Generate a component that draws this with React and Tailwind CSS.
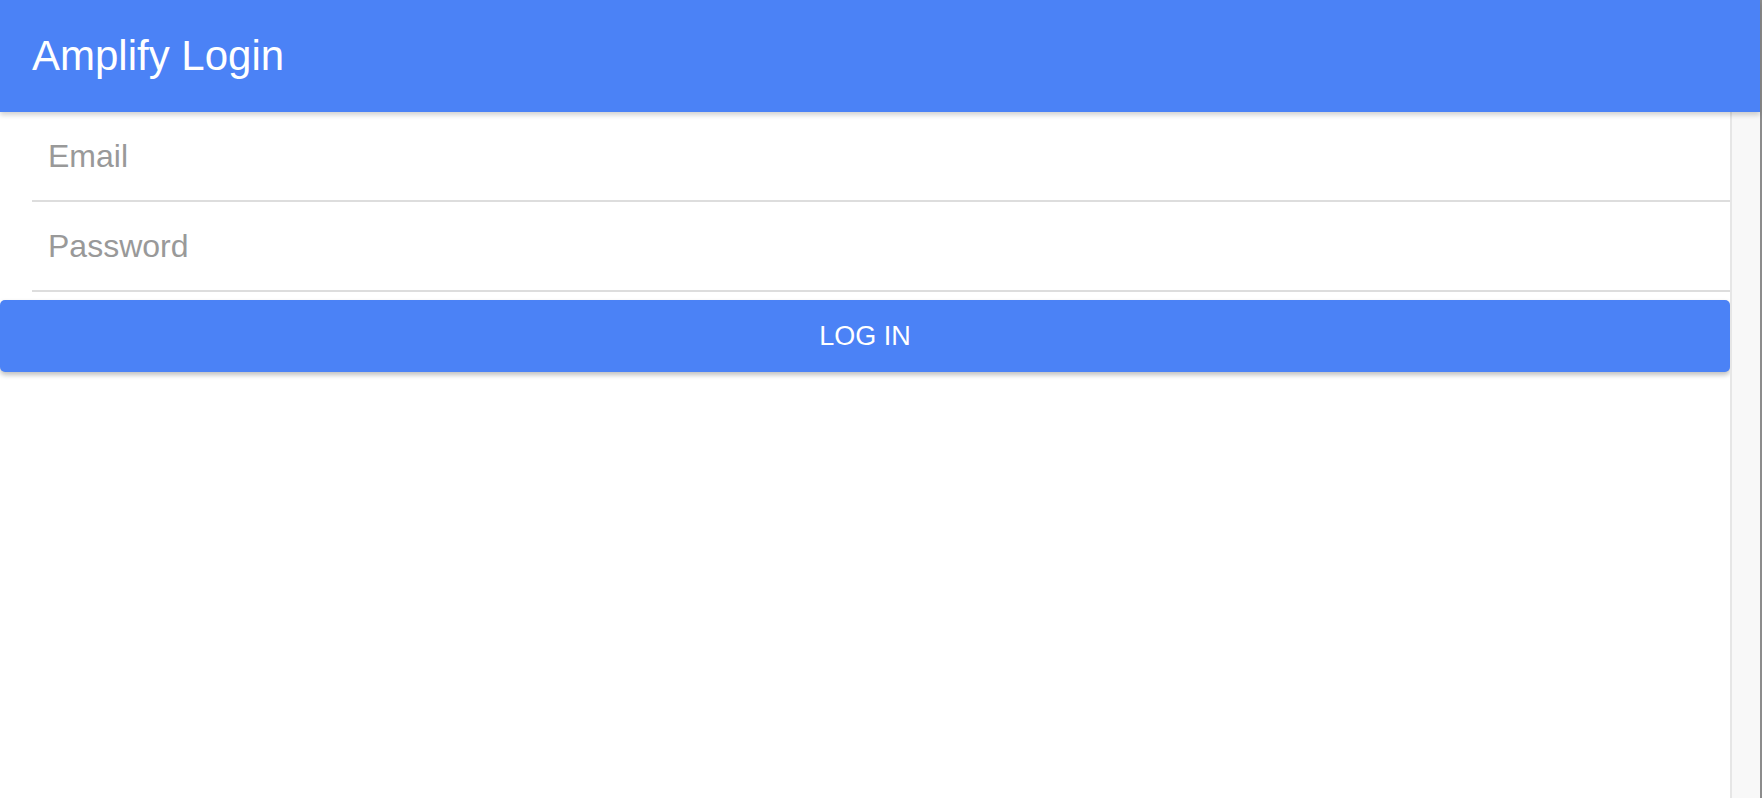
export default function App() {
  return (
    <div
      className="flex h-[798px] w-full overflow-hidden bg-white"
      style={{ fontFamily: '"Liberation Sans", Arial, sans-serif' }}
    >
      <div className="flex flex-1 flex-col">
        <header className="relative z-10 flex h-[112px] shrink-0 items-center bg-[#4b82f6] pl-[32px] shadow-[0_3px_5px_rgba(0,0,0,0.18)]">
          <h1 className="text-[42px] leading-none text-white">Amplify Login</h1>
        </header>

        <div className="flex flex-1">
          <main className="flex-1 bg-white">
            <div className="ml-[32px] flex h-[90px] items-center border-b-2 border-[#dddddd]">
              <input
                type="email"
                placeholder="Email"
                className="w-full bg-transparent pl-[16px] text-[32px] text-gray-700 outline-none placeholder:text-[#999999]"
              />
            </div>
            <div className="ml-[32px] flex h-[90px] items-center border-b-2 border-[#dddddd]">
              <input
                type="password"
                placeholder="Password"
                className="w-full bg-transparent pl-[16px] text-[32px] text-gray-700 outline-none placeholder:text-[#999999]"
              />
            </div>
            <button
              type="button"
              className="mt-[8px] flex h-[72px] w-full items-center justify-center rounded-[5px] bg-[#4b82f6] text-[27px] text-white shadow-[0_3px_5px_rgba(0,0,0,0.25)]"
            >
              LOG IN
            </button>
          </main>
          <div className="w-[30px] border-l-2 border-[#e6e6e6] bg-[#f8f8f8]" />
        </div>
      </div>
      <div className="w-[2px] bg-[#8c8c8c]" />
    </div>
  );
}
